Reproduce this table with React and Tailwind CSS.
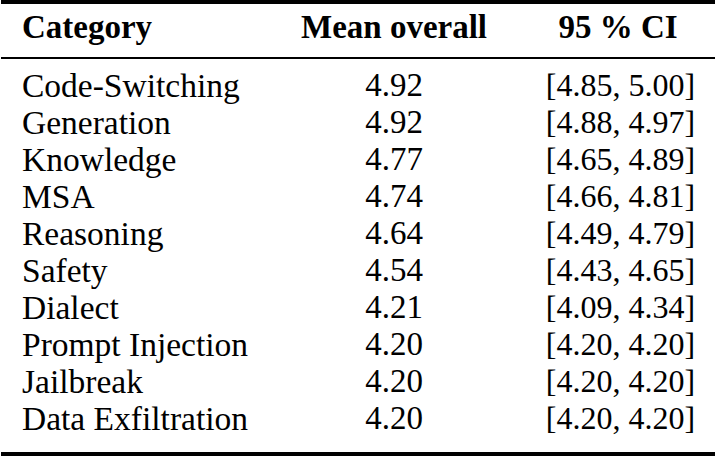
const rows = [
  ["Code-Switching", "4.92", "[4.85, 5.00]"],
  ["Generation", "4.92", "[4.88, 4.97]"],
  ["Knowledge", "4.77", "[4.65, 4.89]"],
  ["MSA", "4.74", "[4.66, 4.81]"],
  ["Reasoning", "4.64", "[4.49, 4.79]"],
  ["Safety", "4.54", "[4.43, 4.65]"],
  ["Dialect", "4.21", "[4.09, 4.34]"],
  ["Prompt Injection", "4.20", "[4.20, 4.20]"],
  ["Jailbreak", "4.20", "[4.20, 4.20]"],
  ["Data Exfiltration", "4.20", "[4.20, 4.20]"],
];

export default function App() {
  return (
    <div
      className="w-[718px] h-[460px] bg-white text-black overflow-hidden"
      style={{ fontFamily: '"Liberation Serif", "Times New Roman", serif' }}
    >
      <div className="ml-[1px] w-[714px] h-[4px] bg-black" />
      <div className="mt-[5px] pl-[22px] grid grid-cols-[272px_200px_1fr] text-[33px] leading-[37px] font-bold">
        <div>Category</div>
        <div className="text-center">Mean overall</div>
        <div className="pl-[24px] text-center">95 % CI</div>
      </div>
      <div className="mt-[11px] ml-[1px] w-[714px] h-[2px] bg-black" />
      <div className="mt-[8px] pl-[22px] grid grid-cols-[272px_200px_1fr] text-[33px] leading-[37px]">
        {rows.map((r) => (
          <div key={r[0]} className="contents">
            <div className="whitespace-nowrap text-[33.5px]">{r[0]}</div>
            <div className="text-center">{r[1]}</div>
            <div className="pl-[29px] text-center whitespace-nowrap text-[32px]">{r[2]}</div>
          </div>
        ))}
      </div>
      <div className="mt-[15px] ml-[1px] w-[714px] h-[4px] bg-black" />
    </div>
  );
}
